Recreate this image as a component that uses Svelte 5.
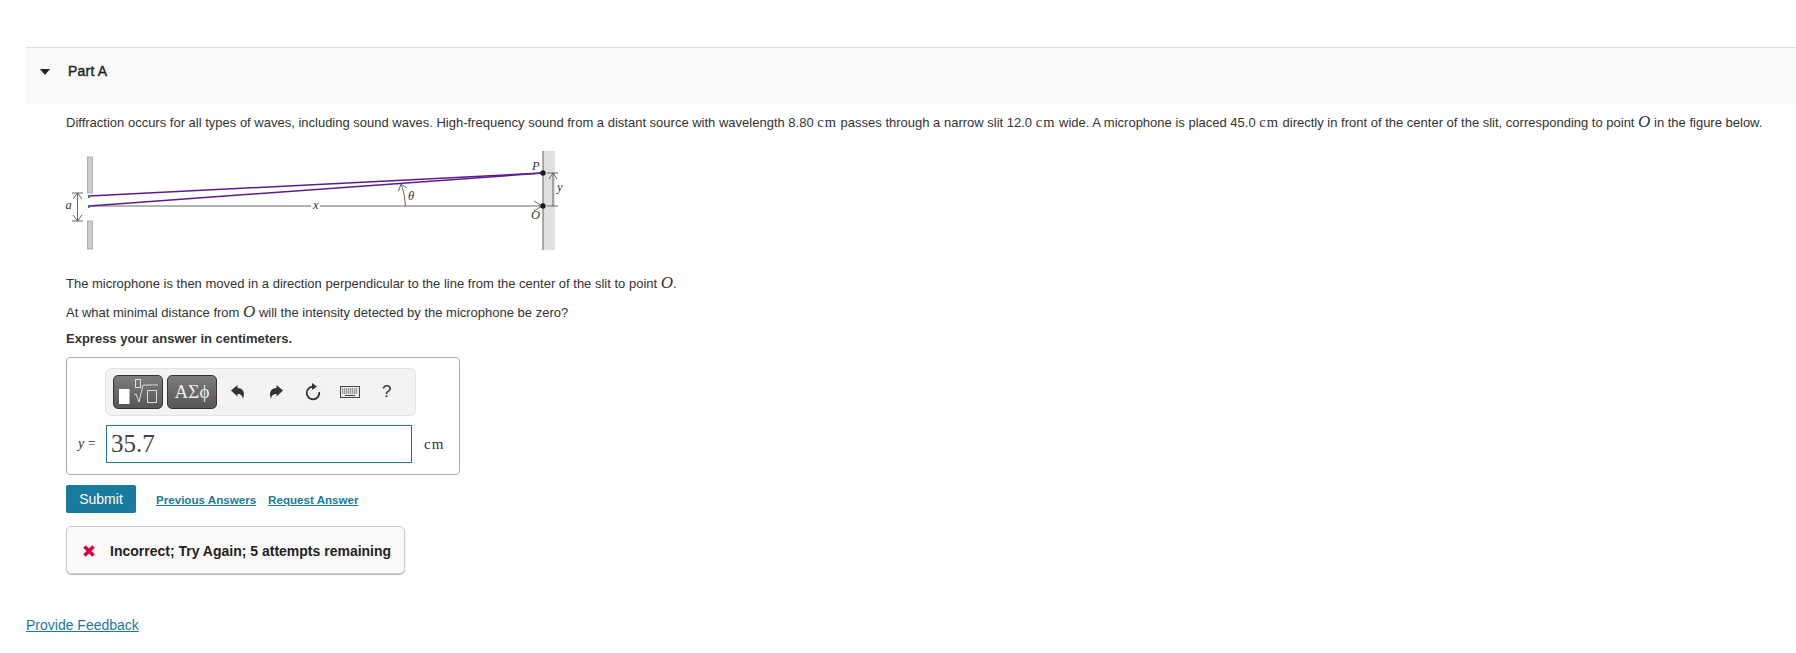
<script>
  const links = ["Previous Answers", "Request Answer"];
  let answer = "35.7";
</script>

<main class="page">
  <div class="part-header">
    <span class="caret"></span>
    <h2>Part A</h2>
  </div>

  <div class="part-body">
    <p class="intro">
      Diffraction occurs for all types of waves, including sound waves. High-frequency sound from a distant source with wavelength 8.80 <span class="unit">cm</span> passes through a narrow slit 12.0 <span class="unit">cm</span> wide. A microphone is placed 45.0 <span class="unit">cm</span> directly in front of the center of the slit, corresponding to point <i class="math">O</i> in the figure below.
    </p>

    <svg class="figure" width="510" height="100" viewBox="60 150 510 100">
      <rect x="87.5" y="157" width="5" height="36" fill="#ccc" stroke="#999" stroke-width="0.7" />
      <rect x="87.5" y="221" width="5" height="28" fill="#ccc" stroke="#999" stroke-width="0.7" />
      <rect x="543" y="151" width="12" height="99" fill="#e0e0e0" />
      <line x1="543" y1="151" x2="543" y2="250" stroke="#777" stroke-width="1.2" />

      <line x1="89" y1="206" x2="311" y2="206" stroke="#666" stroke-width="1" />
      <line x1="320" y1="206" x2="543" y2="206" stroke="#666" stroke-width="1" />
      <path d="M534 201 L542 206 L534 211" fill="none" stroke="#555" stroke-width="0.9" />
      <line x1="89" y1="196" x2="543" y2="173" stroke="#5e1a8f" stroke-width="1.5" />
      <line x1="89" y1="206" x2="543" y2="173" stroke="#5e1a8f" stroke-width="1.5" />
      <rect x="88" y="195" width="2" height="3" fill="#2a7fc0" />
      <rect x="88" y="205" width="2" height="3" fill="#2a7fc0" />

      <path d="M405.5 206 Q405 194 401.5 185" fill="none" stroke="#555" stroke-width="0.9" />
      <path d="M398.5 191 L401 184 L407 188" fill="none" stroke="#555" stroke-width="0.9" />

      <path d="M72 193 H83 M72 221 H83 M77.5 193 V221 M73 199 L77.5 193 L82 199 M73 215 L77.5 221 L82 215" fill="none" stroke="#555" stroke-width="0.9" />
      <path d="M547 173 H558 M547 206 H558 M553 173 V206 M549 179 L553 173 L557 179" fill="none" stroke="#555" stroke-width="0.9" />

      <circle cx="543" cy="173" r="2.7" fill="#1a1a1a" />
      <circle cx="543" cy="206" r="2.7" fill="#1a1a1a" />

      <text x="65.5" y="209" class="label">a</text>
      <text x="313" y="209" class="label">x</text>
      <text x="408" y="199.5" class="label">θ</text>
      <text x="532" y="170" class="label">P</text>
      <text x="531" y="219" class="label">O</text>
      <text x="557" y="191" class="label">y</text>
    </svg>

    <p class="line-one">
      The microphone is then moved in a direction perpendicular to the line from the center of the slit to point <i class="math">O</i>.
    </p>
    <p class="line-two">
      At what minimal distance from <i class="math">O</i> will the intensity detected by the microphone be zero?
    </p>
    <p class="express">Express your answer in centimeters.</p>

    <div class="answer-box">
      <div class="toolbar">
        <button class="tool-btn templates" aria-label="Templates">
          <svg width="42" height="28" viewBox="0 0 42 28">
            <rect x="2" y="11" width="10.5" height="15" fill="#fff" />
            <rect x="18.5" y="1.5" width="5" height="8" fill="none" stroke="#ddd" stroke-width="1" />
            <path d="M17 17 L19 16 L22 24 L26 7 H41" fill="none" stroke="#ddd" stroke-width="1" />
            <rect x="30.5" y="12.5" width="9" height="12" fill="none" stroke="#ddd" stroke-width="1" />
          </svg>
        </button>
        <button class="tool-btn symbols">ΑΣϕ</button>

        <svg class="icon undo" width="16" height="16" viewBox="0 0 16 16">
          <path d="M1 6.5 L7.5 1 V4 C13 4 15.5 8 13 15 C12.5 11.5 11 10 7.5 10 V12.5 Z" fill="#333" />
        </svg>
        <svg class="icon redo" width="16" height="16" viewBox="0 0 16 16">
          <path d="M15 6.5 L8.5 1 V4 C3 4 .5 8 3 15 C3.5 11.5 5 10 8.5 10 V12.5 Z" fill="#333" />
        </svg>
        <svg class="icon reset" width="18" height="18" viewBox="0 0 18 18">
          <path d="M9 3.7 A6.3 6.3 0 1 0 15.2 9" fill="none" stroke="#333" stroke-width="1.8" />
          <path d="M8 0 L13 3.6 L8 7 Z" fill="#333" />
        </svg>
        <svg class="icon keys" width="20" height="12" viewBox="0 0 20 12">
          <rect x="0.5" y="0.5" width="19" height="11" fill="#eee" stroke="#444" />
          <path d="M2 3 H18 M2 5 H18 M2 7 H18" stroke="#444" stroke-dasharray="1.3 0.7" />
          <path d="M5 9.5 H15" stroke="#444" />
        </svg>
        <span class="help">?</span>
      </div>

      <div class="input-row">
        <span class="var"><i>y</i> =</span>
        <div class="input">{answer}</div>
        <span class="input-unit">cm</span>
      </div>
    </div>

    <div class="actions">
      <button class="submit">Submit</button>
      {#each links as link}
        <a href="#top" class="action-link">{link}</a>
      {/each}
    </div>

    <div class="feedback">
      <svg width="14" height="14" viewBox="0 0 14 14">
        <path d="M2.5 2.5 L11.5 11.5 M11.5 2.5 L2.5 11.5" stroke="#d9003d" stroke-width="3.6" />
      </svg>
      <span>Incorrect; Try Again; 5 attempts remaining</span>
    </div>
  </div>

  <a href="#top" class="provide">Provide Feedback</a>
</main>

<style>
  :global(body) {
    background: #fff;
    overflow: hidden;
  }

  .page {
    padding: 47px 0 0 26px;
    font-family: "Liberation Sans", Arial, sans-serif;
    font-size: 13px;
    color: #333;
  }

  .part-header {
    display: flex;
    align-items: flex-start;
    height: 57px;
    padding: 15px 0 0 14px;
    box-sizing: border-box;
    background: #f9f9f9;
    border-top: 1px solid #ddd;
  }
  .caret {
    width: 0;
    height: 0;
    margin: 6px 18px 0 0;
    border-left: 5.5px solid transparent;
    border-right: 5.5px solid transparent;
    border-top: 6px solid #222;
  }
  h2 {
    margin: 0;
    font-size: 14px;
    font-weight: 400;
    line-height: 16px;
    letter-spacing: 0.2px;
    color: #222;
    -webkit-text-stroke: 0.4px #222;
  }

  .part-body {
    padding-left: 40px;
  }
  p {
    margin: 0;
    line-height: 18px;
    white-space: nowrap;
  }
  .intro {
    margin-top: 9px;
  }
  .unit {
    font-family: "Liberation Serif", serif;
    font-size: 14.5px;
    letter-spacing: 1px;
  }
  .math {
    font-family: "Liberation Serif", serif;
    font-size: 17px;
  }
  .figure {
    display: block;
    margin: 18px 0 0 -6px;
  }
  .label {
    font-family: "Liberation Serif", serif;
    font-style: italic;
    font-size: 12.5px;
    fill: #333;
  }
  .line-one {
    margin-top: 24px;
  }
  .line-two {
    margin-top: 10px;
  }
  .express {
    margin-top: 8px;
    font-weight: 700;
  }

  .answer-box {
    width: 394px;
    height: 118px;
    box-sizing: border-box;
    margin-top: 9px;
    padding-top: 10px;
    border: 1px solid #aaa;
    border-radius: 4px;
  }
  .toolbar {
    display: flex;
    align-items: center;
    width: 311px;
    height: 48px;
    box-sizing: border-box;
    margin-left: 38px;
    padding-left: 7px;
    background: #f3f3f3;
    border: 1px solid #e2e2e2;
    border-radius: 6px;
  }
  .tool-btn {
    display: flex;
    align-items: center;
    justify-content: center;
    width: 50px;
    height: 34px;
    padding: 0;
    margin-right: 4px;
    border: 1px solid #333;
    border-radius: 5px;
    background: linear-gradient(#7c7c7c, #565656);
    color: #eee;
    font-family: "Liberation Serif", serif;
    font-size: 19px;
  }
  .icon {
    flex: none;
  }
  .undo {
    margin-left: 9px;
  }
  .redo {
    margin-left: 22px;
  }
  .reset {
    margin-left: 20px;
  }
  .keys {
    margin-left: 18px;
  }
  .help {
    margin-left: 22px;
    font-size: 17px;
    color: #333;
  }

  .input-row {
    display: flex;
    align-items: center;
    margin-top: 9px;
  }
  .var {
    width: 28px;
    padding-left: 11px;
    box-sizing: border-box;
    font-family: "Liberation Serif", serif;
    font-size: 14px;
    white-space: nowrap;
  }
  .input {
    width: 306px;
    height: 38px;
    box-sizing: border-box;
    margin-left: 11px;
    padding-left: 4px;
    border: 1px solid #1a7a9e;
    font-family: "Liberation Serif", serif;
    font-size: 25px;
    line-height: 36px;
    color: #444;
  }
  .input-unit {
    margin-left: 12px;
    font-family: "Liberation Serif", serif;
    font-size: 15px;
    letter-spacing: 1px;
  }

  .actions {
    display: flex;
    align-items: center;
    margin-top: 10px;
  }
  .submit {
    width: 70px;
    height: 28px;
    margin-right: 20px;
    padding: 0;
    border: 0;
    border-radius: 2px;
    background: #1a7a9e;
    color: #fff;
    font-family: inherit;
    font-size: 14px;
  }
  .action-link {
    margin-right: 12px;
    font-size: 11.6px;
    font-weight: 700;
    color: #1a7a9e;
  }

  .feedback {
    display: flex;
    align-items: center;
    gap: 14px;
    width: 339px;
    height: 48px;
    box-sizing: border-box;
    margin-top: 13px;
    padding: 2px 0 0 15px;
    background: #f9f9f9;
    border: 1px solid #ccc;
    border-radius: 5px;
    box-shadow: 0 1px 1px #bbb;
    font-size: 14px;
    font-weight: 700;
    color: #222;
    white-space: nowrap;
  }

  .provide {
    display: inline-block;
    margin-top: 43px;
    font-size: 14px;
    color: #1a7a9e;
  }
</style>
